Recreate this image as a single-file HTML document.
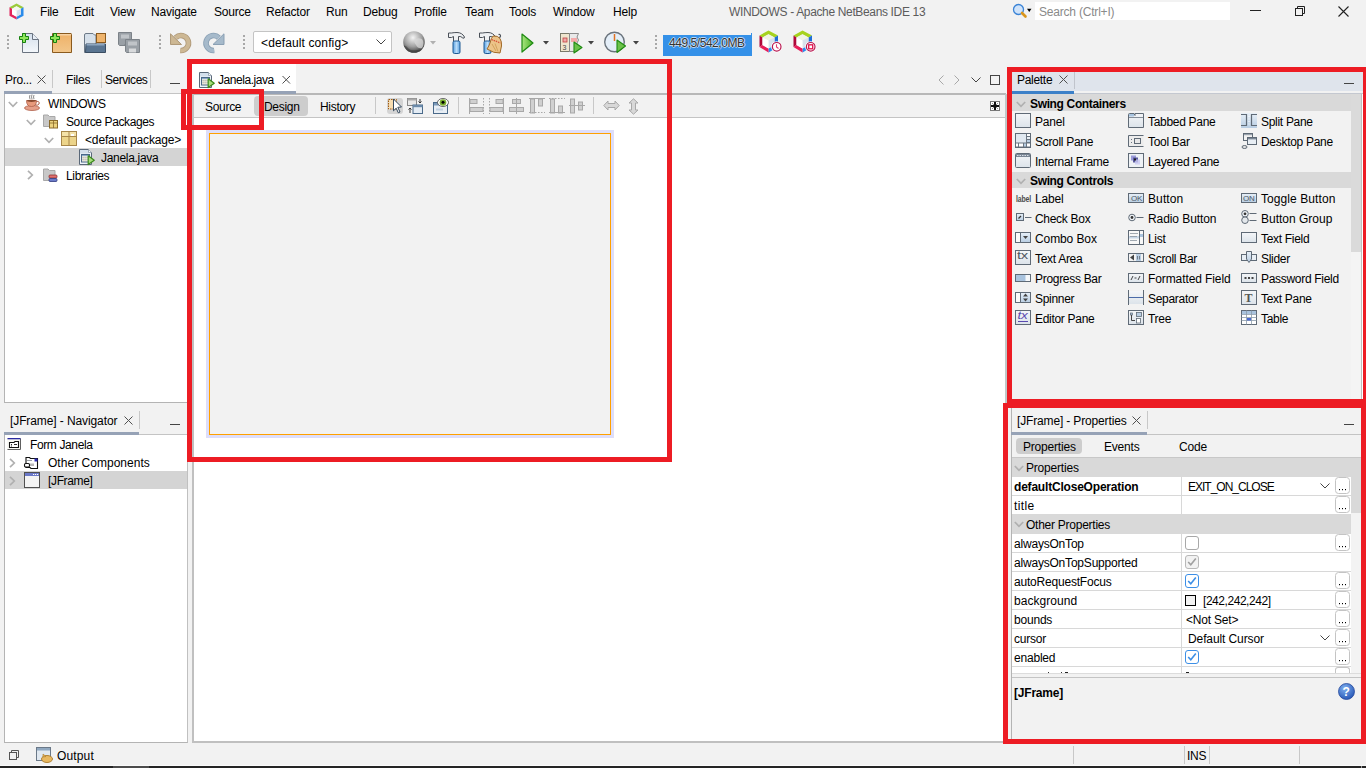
<!DOCTYPE html>
<html><head><meta charset="utf-8">
<style>
*{box-sizing:border-box}
html,body{margin:0;padding:0}
body{width:1366px;height:768px;overflow:hidden;position:relative;background:#f2f2f2;font-family:"Liberation Sans",sans-serif;font-size:12px;color:#000;letter-spacing:-0.2px}
.a{position:absolute}
.t{position:absolute;white-space:nowrap;line-height:14px;font-size:12px}
.b{font-weight:bold}
svg{position:absolute;overflow:visible}
.red{position:absolute;border:5px solid #ed1c24}
.vs{position:absolute;width:1px;background:#c8c8c8}
.hl{position:absolute;height:1px;background:#c4c4c4}
</style></head><body>

<!-- ===== TITLE / MENU BAR ===== -->
<svg style="left:9px;top:3px" width="15" height="17" viewBox="0 0 15 17">
 <polygon points="7.5,0.5 14.5,4.3 14.5,12.7 7.5,16.5 0.5,12.7 0.5,4.3" fill="#e8eef5"/>
 <polygon points="7.5,0.5 14.5,4.3 12,5.7 7.5,3.3 3,5.7 0.5,4.3" fill="#9ccb3b"/>
 <polygon points="14.5,4.3 14.5,12.7 7.5,16.5 7.5,13.7 12,11.3 12,5.7" fill="#2a8bea"/>
 <polygon points="0.5,4.3 3,5.7 3,11.3 7.5,13.7 7.5,16.5 0.5,12.7" fill="#e3245a"/>
 <polygon points="3,5.7 7.5,3.3 12,5.7 7.5,8" fill="#f4f8ee"/>
 <polygon points="7.5,8 12,5.7 12,11.3 7.5,13.7" fill="#d5dfea"/>
 <polygon points="3,5.7 7.5,8 7.5,13.7 3,11.3" fill="#ffffff"/>
</svg>
<div class="t" style="left:40px;top:5px">File</div>
<div class="t" style="left:74px;top:5px">Edit</div>
<div class="t" style="left:110px;top:5px">View</div>
<div class="t" style="left:151px;top:5px">Navigate</div>
<div class="t" style="left:214px;top:5px">Source</div>
<div class="t" style="left:266px;top:5px">Refactor</div>
<div class="t" style="left:326px;top:5px">Run</div>
<div class="t" style="left:363px;top:5px">Debug</div>
<div class="t" style="left:414px;top:5px">Profile</div>
<div class="t" style="left:465px;top:5px">Team</div>
<div class="t" style="left:509px;top:5px">Tools</div>
<div class="t" style="left:553px;top:5px">Window</div>
<div class="t" style="left:613px;top:5px">Help</div>
<div class="t" style="left:729px;top:5px;color:#5c5c5c;letter-spacing:-0.35px">WINDOWS - Apache NetBeans IDE 13</div>

<!-- search -->
<svg style="left:1012px;top:3px" width="20" height="16" viewBox="0 0 20 16">
 <circle cx="6.5" cy="6.5" r="5" fill="#cfe3fa" stroke="#3c84d6" stroke-width="1.3"/>
 <line x1="10" y1="10" x2="13.5" y2="13.5" stroke="#d9951c" stroke-width="2.6" stroke-linecap="round"/>
 <polygon points="15,5.8 19.5,5.8 17.25,9" fill="#000"/>
</svg>
<div class="a" style="left:1035px;top:2px;width:195px;height:18px;background:#fff"></div>
<div class="t" style="left:1039px;top:5px;color:#8a8a8a">Search (Ctrl+I)</div>
<!-- window controls -->
<div class="a" style="left:1250px;top:10px;width:11px;height:1px;background:#222"></div>
<svg style="left:1294px;top:5px" width="12" height="12" viewBox="0 0 12 12">
 <rect x="1.5" y="3.5" width="7" height="7" fill="none" stroke="#222"/>
 <polyline points="3.5,3.5 3.5,1.5 10.5,1.5 10.5,8.5 8.5,8.5" fill="none" stroke="#222"/>
</svg>
<svg style="left:1338px;top:6px" width="11" height="11" viewBox="0 0 11 11">
 <path d="M0.5,0.5 L10.5,10.5 M10.5,0.5 L0.5,10.5" stroke="#222" stroke-width="1.1"/>
</svg>

<!-- ===== TOOLBAR ===== -->
<!-- grips -->
<svg style="left:7px;top:35px" width="3" height="14" viewBox="0 0 3 14"><g fill="#a8a8a8"><rect x="0" y="0" width="2" height="2"/><rect x="0" y="4" width="2" height="2"/><rect x="0" y="8" width="2" height="2"/><rect x="0" y="12" width="2" height="2"/></g></svg>
<svg style="left:159px;top:35px" width="3" height="14" viewBox="0 0 3 14"><g fill="#a8a8a8"><rect x="0" y="0" width="2" height="2"/><rect x="0" y="4" width="2" height="2"/><rect x="0" y="8" width="2" height="2"/><rect x="0" y="12" width="2" height="2"/></g></svg>
<svg style="left:243px;top:35px" width="3" height="14" viewBox="0 0 3 14"><g fill="#a8a8a8"><rect x="0" y="0" width="2" height="2"/><rect x="0" y="4" width="2" height="2"/><rect x="0" y="8" width="2" height="2"/><rect x="0" y="12" width="2" height="2"/></g></svg>
<svg style="left:655px;top:35px" width="3" height="14" viewBox="0 0 3 14"><g fill="#a8a8a8"><rect x="0" y="0" width="2" height="2"/><rect x="0" y="4" width="2" height="2"/><rect x="0" y="8" width="2" height="2"/><rect x="0" y="12" width="2" height="2"/></g></svg>
<!-- new file -->
<svg style="left:19px;top:33px" width="21" height="21" viewBox="0 0 21 21">
 <defs><linearGradient id="gdoc" x1="0" y1="0" x2="0" y2="1"><stop offset="0" stop-color="#d4dfec"/><stop offset="1" stop-color="#f4f7fb"/></linearGradient></defs>
 <path d="M3.5,0.5 H13.5 L19.5,6.5 V19.5 H3.5 Z" fill="url(#gdoc)" stroke="#6a7380"/>
 <path d="M13.5,0.5 V6.5 H19.5" fill="#e8eef6" stroke="#6a7380"/>
 <path d="M3,0 H6 V3 H9 V6 H6 V9 H3 V6 H0 V3 H3 Z" fill="#8ee55a" stroke="#15800f" transform="translate(0.5,0.5)"/>
</svg>
<!-- new project -->
<svg style="left:50px;top:33px" width="23" height="21" viewBox="0 0 23 21">
 <defs><linearGradient id="gorg" x1="0" y1="0" x2="0" y2="1"><stop offset="0" stop-color="#fbe3c2"/><stop offset="0.15" stop-color="#efb46c"/><stop offset="1" stop-color="#f2c68a"/></linearGradient></defs>
 <path d="M2.5,0.5 H21 Q21.5,0.5 21.5,1.5 V19.5 H2.5 Z" fill="url(#gorg)" stroke="#8a5a1e"/>
 <path d="M3,0 H6 V3 H9 V6 H6 V9 H3 V6 H0 V3 H3 Z" fill="#8ee55a" stroke="#15800f" transform="translate(0.5,0.5)"/>
</svg>
<!-- open project -->
<svg style="left:84px;top:32px" width="23" height="22" viewBox="0 0 23 22">
 <path d="M0.5,3 Q0.5,1.5 2,1.5 H9 L10.5,3 H12 V20.5 H0.5 Z" fill="#d6e0ea" stroke="#6d7a88"/>
 <rect x="12.5" y="1.5" width="9" height="9" fill="#efb46c" stroke="#8a5a1e"/>
 <path d="M2,12 H21.5 V20.5 H1.5 Z" fill="#5a7591" stroke="#3a4d62"/>
 <rect x="2.5" y="12" width="18" height="1.5" fill="#8da6bf"/>
</svg>
<!-- save all -->
<svg style="left:118px;top:32px" width="23" height="22" viewBox="0 0 23 22">
 <path d="M0.5,0.5 H13.5 V12 H7 V13.5 H1.5 L0.5,12.5 Z" fill="#9aa0a6" stroke="#7c8288"/>
 <rect x="3" y="2.5" width="8" height="4" fill="#c0c4c8"/>
 <path d="M7.5,7.5 H21.5 V20.5 H8.5 L7.5,19.5 Z" fill="#9aa0a6" stroke="#7c8288"/>
 <rect x="10" y="9.5" width="9" height="4" fill="#c0c4c8"/>
 <rect x="11" y="16.5" width="7" height="4" fill="#d8dadc"/>
</svg>
<!-- undo -->
<svg style="left:170px;top:33px" width="22" height="21" viewBox="0 0 22 21">
 <path d="M5.7,4.7 A7.5,7.5 0 1 1 10.3,17.5" fill="none" stroke="#b09a7a" stroke-width="5.6"/>
 <polygon points="0.5,0.8 0.5,11.5 11.5,11.5" fill="#c9b490" stroke="#b09a7a" stroke-width="1" stroke-linejoin="round"/>
 <path d="M5.7,4.7 A7.5,7.5 0 1 1 10.3,17.5" fill="none" stroke="#cdb894" stroke-width="3.8"/>
 <polygon points="1.5,3 1.5,10.5 9,10.5" fill="#cdb894"/>
</svg>
<!-- redo -->
<svg style="left:203px;top:33px" width="22" height="21" viewBox="0 0 22 21">
 <g transform="translate(21.5,0) scale(-1,1)">
 <path d="M5.7,4.7 A7.5,7.5 0 1 1 10.3,17.5" fill="none" stroke="#8aa0b4" stroke-width="5.6"/>
 <polygon points="0.5,0.8 0.5,11.5 11.5,11.5" fill="#a4b8c8" stroke="#8aa0b4" stroke-width="1" stroke-linejoin="round"/>
 <path d="M5.7,4.7 A7.5,7.5 0 1 1 10.3,17.5" fill="none" stroke="#a6bacb" stroke-width="3.8"/>
 <polygon points="1.5,3 1.5,10.5 9,10.5" fill="#a6bacb"/>
 </g>
</svg>
<!-- config combo -->
<div class="a" style="left:253px;top:31px;width:139px;height:22px;background:#fff;border:1px solid #c4c4c4;border-radius:2px"></div>
<div class="t" style="left:261px;top:36px;letter-spacing:0.12px">&lt;default config&gt;</div>
<svg style="left:376px;top:39px" width="10" height="6" viewBox="0 0 10 6"><polyline points="0.5,0.5 5,5 9.5,0.5" fill="none" stroke="#444" stroke-width="1"/></svg>
<!-- globe -->
<svg style="left:403px;top:31px" width="23" height="23" viewBox="0 0 23 23">
 <defs><radialGradient id="gglb" cx="0.45" cy="0.3" r="0.75"><stop offset="0" stop-color="#f4f4f4"/><stop offset="0.55" stop-color="#a0a0a0"/><stop offset="1" stop-color="#303030"/></radialGradient>
 <clipPath id="cglb"><circle cx="11" cy="11" r="10.8"/></clipPath></defs>
 <circle cx="11" cy="11" r="10.8" fill="url(#gglb)"/>
 <g clip-path="url(#cglb)">
  <path d="M11,9 Q14,6 19,8 Q22,12 19,17 Q15,18 13,14 Q11,12 11,9 Z" fill="#d8d8d8" opacity="0.75"/>
  <path d="M0,14 Q4,15 6,18 Q8,20 14,19 Q18,19 22,17 V23 H0 Z" fill="#3a3a3a" opacity="0.55"/>
 </g>
</svg>
<svg style="left:430px;top:41px" width="6" height="4" viewBox="0 0 6 4"><polygon points="0,0 6,0 3,3.5" fill="#b0b0b0"/></svg>
<!-- build hammer -->
<svg style="left:448px;top:32px" width="19" height="22" viewBox="0 0 19 22">
 <defs><linearGradient id="ghnd" x1="0" y1="0" x2="1" y2="0"><stop offset="0" stop-color="#5aa0e0"/><stop offset="0.5" stop-color="#b8dcfa"/><stop offset="1" stop-color="#5aa0e0"/></linearGradient></defs>
 <path d="M0.5,1 H3.5 Q6,0.5 9,0.5 Q14,0.5 16.5,5 Q16.5,6.8 14.8,6 Q13,4 10.5,4.5 V9.5 H5.5 V4.5 L3.5,5.5 H0.5 Z" fill="#eef0f2" stroke="#4a5058" stroke-width="1"/>
 <rect x="5" y="9" width="7" height="12.5" rx="1.5" fill="url(#ghnd)" stroke="#1e5a94"/>
</svg>
<!-- clean build -->
<svg style="left:479px;top:32px" width="24" height="22" viewBox="0 0 24 22">
 <path d="M0.5,1 H3.5 Q6,0.5 9,0.5 Q14,0.5 16.5,5 Q16.5,6.8 14.8,6 Q13,4 10.5,4.5 V9.5 H5.5 V4.5 L3.5,5.5 H0.5 Z" fill="#eef0f2" stroke="#4a5058" stroke-width="1"/>
 <rect x="5" y="9" width="7" height="12.5" rx="1.5" fill="url(#ghnd)" stroke="#1e5a94"/>
 <path d="M19.5,2.5 Q21.5,2 21.5,4 L20.5,6" fill="none" stroke="#4a5058" stroke-width="1.2"/>
 <path d="M14,4 Q19,3.5 21,6.5 Q23,10 22.5,14 L21,21 Q15,21.5 8,17 Q10,14 11,11 Q12,6 14,4 Z" fill="#ecc489" stroke="#a06a28" stroke-width="1"/>
 <path d="M12.5,7.5 L21.5,11" stroke="#d8503a" stroke-width="1.3" stroke-dasharray="1.5,0.8"/>
 <path d="M13,12 L17,19 M16,11.5 L19,19.5" stroke="#c8944a" stroke-width="0.7"/>
</svg>
<!-- run -->
<svg style="left:521px;top:33px" width="13" height="20" viewBox="0 0 13 20">
 <defs><linearGradient id="grun" x1="0" y1="0" x2="1" y2="0"><stop offset="0" stop-color="#a8e57f"/><stop offset="1" stop-color="#4db32a"/></linearGradient></defs>
 <polygon points="1,1 12,10 1,19" fill="url(#grun)" stroke="#1e8a12" stroke-width="1.2" stroke-linejoin="round"/>
</svg>
<svg style="left:543px;top:41px" width="6" height="4" viewBox="0 0 6 4"><polygon points="0,0 6,0 3,3.5" fill="#444"/></svg>
<!-- debug -->
<svg style="left:560px;top:32px" width="23" height="22" viewBox="0 0 23 22">
 <rect x="0.5" y="1.5" width="9" height="18" fill="#efe6cf" stroke="#7a7a6a"/>
 <path d="M9.5,1.5 H18.5 L17,5 L18.5,8 L17,11 V19.5 H9.5 Z" fill="#e9e9e9" stroke="#8a8a8a"/>
 <rect x="3" y="6" width="4" height="4" fill="#f0a8a8" stroke="#c04040" stroke-width="0.8"/>
 <rect x="11" y="6" width="6" height="4" fill="#f4aaaa"/>
 <text x="2.5" y="18" font-size="7" font-family="Liberation Sans" fill="#444">3</text>
 <polygon points="14,10 22,15.5 14,21" fill="#6cc24a" stroke="#1e8a12" stroke-width="1.1" stroke-linejoin="round"/>
</svg>
<svg style="left:588px;top:41px" width="6" height="4" viewBox="0 0 6 4"><polygon points="0,0 6,0 3,3.5" fill="#444"/></svg>
<!-- profile -->
<svg style="left:604px;top:31px" width="23" height="23" viewBox="0 0 23 23">
 <circle cx="10.5" cy="11" r="9.8" fill="#e4eef8" stroke="#6a737c" stroke-width="1.4"/>
 <line x1="10.5" y1="3" x2="10.5" y2="10" stroke="#e07020" stroke-width="1.5"/>
 <polygon points="13,9 21.5,15 13,21.5" fill="#6cc24a" stroke="#1e8a12" stroke-width="1.1" stroke-linejoin="round"/>
</svg>
<svg style="left:633px;top:41px" width="6" height="4" viewBox="0 0 6 4"><polygon points="0,0 6,0 3,3.5" fill="#444"/></svg>
<!-- memory -->
<div class="a" style="left:663px;top:35px;width:89px;height:21px;background:#3591e8"></div>
<div class="a" style="left:751px;top:33px;width:1px;height:2px;background:#3591e8"></div>
<div class="t" style="left:669px;top:36px;color:#333;letter-spacing:-0.45px;text-shadow:1px 0 0 rgba(230,236,245,.75),-1px 0 0 rgba(230,236,245,.75),0 1px 0 rgba(230,236,245,.75),0 -1px 0 rgba(230,236,245,.75)">449,5/542,0MB</div>
<!-- NB profiler icons -->
<svg style="left:759px;top:30px" width="24" height="24" viewBox="0 0 24 24">
 <polygon points="9.5,0.5 19,5.5 19,17 9.5,22.5 0.5,17 0.5,5.5" fill="#e8eef4"/>
 <polygon points="9.5,0.5 19,5.5 15.5,7.5 9.5,4.3 3.5,7.5 0.5,5.5" fill="#a6d21e"/>
 <polygon points="19,5.5 19,17 15.5,15 15.5,7.5" fill="#1f6fd8"/>
 <polygon points="9.5,22.5 19,17 15.5,15 9.5,18.5" fill="#2a8cf0"/>
 <polygon points="0.5,5.5 3.5,7.5 3.5,15 0.5,17" fill="#b0083a"/>
 <polygon points="0.5,17 3.5,15 9.5,18.5 9.5,22.5" fill="#e81e5a"/>
 <polygon points="3.5,7.5 9.5,4.3 15.5,7.5 9.5,10.5" fill="#f0f4e4"/>
 <polygon points="9.5,10.5 15.5,7.5 15.5,15 9.5,18.5" fill="#d8e2ec"/>
 <polygon points="3.5,7.5 9.5,10.5 9.5,18.5 3.5,15" fill="#fff"/>
 <circle cx="17.7" cy="16.8" r="5.6" fill="#fff"/>
 <circle cx="17.7" cy="16.8" r="4.3" fill="#fff" stroke="#b81850" stroke-width="1.2"/>
 <path d="M17.5,14.3 V17 L19.5,18.5" fill="none" stroke="#e04070" stroke-width="1.1"/>
</svg>
<svg style="left:793px;top:30px" width="24" height="24" viewBox="0 0 24 24">
 <polygon points="9.5,0.5 19,5.5 19,17 9.5,22.5 0.5,17 0.5,5.5" fill="#e8eef4"/>
 <polygon points="9.5,0.5 19,5.5 15.5,7.5 9.5,4.3 3.5,7.5 0.5,5.5" fill="#a6d21e"/>
 <polygon points="19,5.5 19,17 15.5,15 15.5,7.5" fill="#1f6fd8"/>
 <polygon points="9.5,22.5 19,17 15.5,15 9.5,18.5" fill="#2a8cf0"/>
 <polygon points="0.5,5.5 3.5,7.5 3.5,15 0.5,17" fill="#b0083a"/>
 <polygon points="0.5,17 3.5,15 9.5,18.5 9.5,22.5" fill="#e81e5a"/>
 <polygon points="3.5,7.5 9.5,4.3 15.5,7.5 9.5,10.5" fill="#f0f4e4"/>
 <polygon points="9.5,10.5 15.5,7.5 15.5,15 9.5,18.5" fill="#d8e2ec"/>
 <polygon points="3.5,7.5 9.5,10.5 9.5,18.5 3.5,15" fill="#fff"/>
 <circle cx="17.7" cy="16.8" r="5.6" fill="#fff"/>
 <circle cx="17.7" cy="16.8" r="4.3" fill="#fff" stroke="#b81850" stroke-width="1.2"/>
 <rect x="15.7" y="14.8" width="4" height="4" fill="#fff" stroke="#e0104a" stroke-width="1.3"/>
</svg>

<!-- ===== LEFT PANELS ===== -->
<!-- Projects tabs -->
<div class="t" style="left:5px;top:73px;letter-spacing:-0.3px">Pro...</div>
<svg style="left:37px;top:75px" width="9" height="9" viewBox="0 0 9 9"><path d="M0.5,0.5 L8.5,8.5 M8.5,0.5 L0.5,8.5" stroke="#505050" stroke-width="1"/></svg>
<div class="vs" style="left:52px;top:70px;height:18px"></div>
<div class="t" style="left:66px;top:73px">Files</div>
<div class="vs" style="left:101px;top:70px;height:18px"></div>
<div class="t" style="left:105px;top:73px;letter-spacing:-0.45px">Services</div>
<div class="vs" style="left:150px;top:70px;height:18px"></div>
<div class="a" style="left:170px;top:83px;width:10px;height:1px;background:#444"></div>
<div class="a" style="left:4px;top:91px;width:48px;height:3px;background:#96a2b6"></div>
<div class="a" style="left:52px;top:93px;width:135px;height:1px;background:#c4c4c4"></div>
<!-- project tree -->
<div class="a" style="left:4px;top:94px;width:184px;height:309px;background:#fff;border-left:1px solid #b4b4b4;border-bottom:1px solid #b4b4b4;border-right:1px solid #c0c0c0"></div>
<div class="a" style="left:5px;top:148px;width:182px;height:18px;background:#d4d4d4"></div>
<!-- chevrons -->
<svg style="left:8px;top:101px" width="10" height="7" viewBox="0 0 10 7"><polyline points="0.8,1 5,5.3 9.2,1" fill="none" stroke="#b0b0b0" stroke-width="1.7"/></svg>
<svg style="left:26px;top:119px" width="10" height="7" viewBox="0 0 10 7"><polyline points="0.8,1 5,5.3 9.2,1" fill="none" stroke="#b0b0b0" stroke-width="1.7"/></svg>
<svg style="left:44px;top:137px" width="10" height="7" viewBox="0 0 10 7"><polyline points="0.8,1 5,5.3 9.2,1" fill="none" stroke="#b0b0b0" stroke-width="1.7"/></svg>
<svg style="left:27px;top:170px" width="7" height="10" viewBox="0 0 7 10"><polyline points="1,0.8 5.3,5 1,9.2" fill="none" stroke="#b0b0b0" stroke-width="1.7"/></svg>
<!-- coffee -->
<svg style="left:24px;top:94px" width="17" height="17" viewBox="0 0 17 17">
 <path d="M6,1 Q5,3 6,5 M8,0.5 Q7,3 8,5 M10,1 Q9,3 10,5" stroke="#808080" stroke-width="0.9" fill="none"/>
 <ellipse cx="8" cy="14" rx="7.5" ry="2.5" fill="#e6a08a" stroke="#b0604a" stroke-width="0.8"/>
 <path d="M2.5,6.5 H12.5 Q12.5,12.5 7.5,12.5 Q2.5,12.5 2.5,6.5 Z" fill="#e89a7c" stroke="#b0604a" stroke-width="0.8"/>
 <path d="M12.3,7.5 Q16,7 15,10 Q14,11.5 11.5,11" fill="none" stroke="#b0604a" stroke-width="1"/>
 <ellipse cx="7.5" cy="6.8" rx="4.5" ry="1.1" fill="#8a4a30"/>
</svg>
<div class="t" style="left:48px;top:97px;letter-spacing:-0.45px">WINDOWS</div>
<!-- source packages -->
<svg style="left:43px;top:114px" width="16" height="15" viewBox="0 0 16 15">
 <path d="M0.5,1 H5 L6.5,2.5 H12 V12.5 H0.5 Z" fill="#c8c8c8" stroke="#a8a8a8"/>
 <rect x="6.5" y="6.5" width="8" height="7.5" fill="#ecd27e" stroke="#8a6a2a"/>
 <line x1="10.5" y1="6.5" x2="10.5" y2="14" stroke="#8a6a2a" stroke-width="0.8"/>
 <line x1="6.5" y1="9" x2="14.5" y2="9" stroke="#8a6a2a" stroke-width="0.8"/>
</svg>
<div class="t" style="left:66px;top:115px;letter-spacing:-0.4px">Source Packages</div>
<!-- default package -->
<svg style="left:61px;top:131px" width="16" height="15" viewBox="0 0 16 15">
 <rect x="0.5" y="0.5" width="15" height="14" fill="#ecd48a" stroke="#a8874a"/>
 <rect x="1" y="1" width="14" height="4" fill="#f4e2a8"/>
 <line x1="8" y1="0.5" x2="8" y2="14.5" stroke="#a8874a"/>
 <line x1="0.5" y1="5.5" x2="15.5" y2="5.5" stroke="#a8874a"/>
 <rect x="10" y="3" width="3" height="2" fill="#fff"/>
</svg>
<div class="t" style="left:85px;top:133px;letter-spacing:-0.15px">&lt;default package&gt;</div>
<!-- java file -->
<svg style="left:79px;top:149px" width="16" height="16" viewBox="0 0 16 16">
 <path d="M0.5,0.5 H9.5 L12.5,3.5 V15.5 H0.5 Z" fill="#eef3f8" stroke="#5a6878"/>
 <rect x="1" y="1" width="8.5" height="3.5" fill="#d3dfeb"/>
 <path d="M9.5,0.5 V3.5 H12.5" fill="#fafcff" stroke="#8a98a8" stroke-width="0.8"/>
 <rect x="2.5" y="5.5" width="8" height="7.5" fill="#f7f2e2" stroke="#4a6888"/>
 <rect x="3" y="6" width="7" height="1.2" fill="#8aa8c8"/>
 <path d="M3.5,8.8 H9.5 M3.5,10.8 H9.5" stroke="#808890" stroke-width="0.9" stroke-dasharray="1.2,0.8"/>
 <polygon points="9.2,6.8 15.3,11.2 9.2,15.6" fill="#a6dc7c" stroke="#3c8a1c" stroke-width="1.2" stroke-linejoin="round"/>
</svg>
<div class="t" style="left:101px;top:151px;letter-spacing:-0.3px">Janela.java</div>
<!-- libraries -->
<svg style="left:43px;top:168px" width="16" height="15" viewBox="0 0 16 15">
 <path d="M0.5,1 H5 L6.5,2.5 H12 V12.5 H0.5 Z" fill="#c8c8c8" stroke="#a8a8a8"/>
 <rect x="6" y="7" width="8" height="3" rx="1" fill="#e07070" stroke="#903030" stroke-width="0.8"/>
 <rect x="6" y="10.5" width="8" height="3" rx="1" fill="#6a7ac8" stroke="#303a80" stroke-width="0.8"/>
</svg>
<div class="t" style="left:66px;top:169px;letter-spacing:-0.3px">Libraries</div>

<!-- Navigator -->
<div class="t" style="left:10px;top:414px;letter-spacing:-0.1px">[JFrame] - Navigator</div>
<svg style="left:124px;top:416px" width="9" height="9" viewBox="0 0 9 9"><path d="M0.5,0.5 L8.5,8.5 M8.5,0.5 L0.5,8.5" stroke="#505050" stroke-width="1"/></svg>
<div class="vs" style="left:139px;top:411px;height:18px"></div>
<div class="a" style="left:170px;top:424px;width:10px;height:1px;background:#444"></div>
<div class="a" style="left:4px;top:432px;width:135px;height:3px;background:#96a2b6"></div>
<div class="a" style="left:139px;top:434px;width:48px;height:1px;background:#c4c4c4"></div>
<div class="a" style="left:4px;top:435px;width:184px;height:308px;background:#fff;border-left:1px solid #b4b4b4;border-bottom:1px solid #b4b4b4;border-right:1px solid #c0c0c0"></div>
<div class="a" style="left:5px;top:471px;width:182px;height:18px;background:#d4d4d4"></div>
<svg style="left:7px;top:438px" width="14" height="12" viewBox="0 0 14 12">
 <rect x="0" y="0" width="14" height="12" fill="#f8f8f4"/>
 <path d="M0.5,11.5 H13.5 V0.5" fill="none" stroke="#606060"/>
 <rect x="0.5" y="0" width="13" height="1.3" fill="#2a2aa0"/>
 <path d="M2.5,4.5 H7 L8,3.5 H11.5 V9.5 H2.5 Z" fill="#fff" stroke="#101010" stroke-width="1.1"/>
 <path d="M4,6.5 H5 M4,8 H5 M7,6.5 H10" stroke="#101010" stroke-width="0.9"/>
</svg>
<div class="t" style="left:30px;top:438px;letter-spacing:-0.38px">Form Janela</div>
<svg style="left:9px;top:458px" width="7" height="10" viewBox="0 0 7 10"><polyline points="1,0.8 5.3,5 1,9.2" fill="none" stroke="#b0b0b0" stroke-width="1.7"/></svg>
<svg style="left:24px;top:456px" width="15" height="14" viewBox="0 0 15 14">
 <path d="M2,1.5 H5.5 L6.5,2.5 H13.5 V12.5 H7 L6,11.5 H2 Z" fill="#fff" stroke="#101010" stroke-width="1.1"/>
 <path d="M3,4.5 H8" stroke="#9aa0a8" stroke-width="1"/>
 <rect x="10.5" y="2.5" width="3" height="3" fill="#2a2ab0"/>
 <rect x="0.5" y="7.5" width="5" height="3.5" rx="1.2" fill="#fff" stroke="#101010" stroke-width="1.1"/>
 <rect x="6" y="7.5" width="4" height="2.5" fill="#b8b8b8"/>
</svg>
<div class="t" style="left:48px;top:456px;letter-spacing:0.03px">Other Components</div>
<svg style="left:9px;top:476px" width="7" height="10" viewBox="0 0 7 10"><polyline points="1,0.8 5.3,5 1,9.2" fill="none" stroke="#b0b0b0" stroke-width="1.7"/></svg>
<svg style="left:24px;top:472px" width="16" height="16" viewBox="0 0 16 16">
 <rect x="0.5" y="0.5" width="15" height="15" fill="#f4f4f4" stroke="#505050"/>
 <rect x="1" y="1" width="14" height="3" fill="#6a78c8"/>
 <rect x="9" y="2" width="1.2" height="1" fill="#fff"/><rect x="11" y="2" width="1.2" height="1" fill="#fff"/><rect x="13" y="2" width="1.2" height="1" fill="#fff"/>
</svg>
<div class="t" style="left:48px;top:474px;letter-spacing:-0.35px">[JFrame]</div>

<!-- Output status -->
<svg style="left:9px;top:750px" width="11" height="11" viewBox="0 0 11 11">
 <rect x="0.5" y="2.5" width="7" height="7" fill="#f2f2f2" stroke="#555"/>
 <polyline points="2.5,2.5 2.5,0.5 9.5,0.5 9.5,7.5 7.5,7.5" fill="none" stroke="#555"/>
</svg>
<svg style="left:36px;top:747px" width="17" height="16" viewBox="0 0 17 16">
 <rect x="0.5" y="0.5" width="14" height="13" fill="#e0e8f0" stroke="#6a7888"/>
 <rect x="1" y="1" width="13" height="2.5" fill="#90a8c0"/>
 <ellipse cx="11" cy="12" rx="5.5" ry="3.5" fill="#e8b860" stroke="#a87828" stroke-width="0.9"/>
 <polygon points="7,7 10,9.5 7,10" fill="#e8b860" stroke="#a87828" stroke-width="0.6"/>
</svg>
<div class="t" style="left:57px;top:749px;letter-spacing:0.15px">Output</div>


<!-- ===== EDITOR ===== -->
<!-- editor tab row -->
<div class="a" style="left:192px;top:64px;width:104px;height:27px;background:#fff"></div>
<div class="a" style="left:192px;top:91px;width:104px;height:3px;background:#96a2b6"></div>
<div class="a" style="left:296px;top:93px;width:710px;height:1px;background:#b8b8b8"></div>
<svg style="left:199px;top:72px" width="16" height="16" viewBox="0 0 16 16">
 <path d="M0.5,0.5 H9.5 L12.5,3.5 V15.5 H0.5 Z" fill="#eef3f8" stroke="#5a6878"/>
 <rect x="1" y="1" width="8.5" height="3.5" fill="#d3dfeb"/>
 <path d="M9.5,0.5 V3.5 H12.5" fill="#fafcff" stroke="#8a98a8" stroke-width="0.8"/>
 <rect x="2.5" y="5.5" width="8" height="7.5" fill="#f7f2e2" stroke="#4a6888"/>
 <rect x="3" y="6" width="7" height="1.2" fill="#8aa8c8"/>
 <path d="M3.5,8.8 H9.5 M3.5,10.8 H9.5" stroke="#808890" stroke-width="0.9" stroke-dasharray="1.2,0.8"/>
 <polygon points="9.2,6.8 15.3,11.2 9.2,15.6" fill="#a6dc7c" stroke="#3c8a1c" stroke-width="1.2" stroke-linejoin="round"/>
</svg>
<div class="t" style="left:218px;top:73px;letter-spacing:-0.45px">Janela.java</div>
<svg style="left:282px;top:76px" width="9" height="8" viewBox="0 0 9 8"><path d="M0.5,0 L8,7.5 M8,0 L0.5,7.5" stroke="#505050" stroke-width="1"/></svg>
<!-- tab controls -->
<svg style="left:938px;top:75px" width="6" height="10" viewBox="0 0 6 10"><polyline points="5.5,0.5 1,5 5.5,9.5" fill="none" stroke="#a8a8a8" stroke-width="1"/></svg>
<svg style="left:954px;top:75px" width="6" height="10" viewBox="0 0 6 10"><polyline points="0.5,0.5 5,5 0.5,9.5" fill="none" stroke="#a8a8a8" stroke-width="1"/></svg>
<svg style="left:971px;top:77px" width="10" height="6" viewBox="0 0 10 6"><polyline points="0.5,0.5 5,5 9.5,0.5" fill="none" stroke="#444" stroke-width="1"/></svg>
<div class="a" style="left:990px;top:75px;width:10px;height:10px;border:1px solid #444"></div>
<!-- editor body -->
<div class="a" style="left:192px;top:94px;width:815px;height:649px;border-left:2px solid #c0c0c0;border-right:2px solid #c0c8c8;border-bottom:2px solid #c0c0c0;background:#fff"></div>
<div class="a" style="left:194px;top:94px;width:811px;height:24px;background:#f2f2f2;border-bottom:1px solid #c4c4c4"></div>
<div class="a" style="left:194px;top:94px;width:811px;height:1px;background:#b8b8b8"></div>
<div class="a" style="left:254px;top:96px;width:54px;height:20px;background:#cdcdcd;border-radius:4px"></div>
<div class="t" style="left:205px;top:100px;letter-spacing:-0.3px">Source</div>
<div class="t" style="left:264px;top:100px;letter-spacing:-0.3px">Design</div>
<div class="t" style="left:320px;top:100px;letter-spacing:-0.3px">History</div>
<div class="vs" style="left:375px;top:97px;height:17px"></div>
<!-- selection tool -->
<div class="a" style="left:387px;top:98px;width:16px;height:16px;background:#d4d4d4;border-radius:3px"></div>
<svg style="left:387px;top:98px" width="16" height="16" viewBox="0 0 16 16">
 <rect x="1.5" y="1.5" width="8" height="9.5" fill="#f6dcb0" stroke="#a05a10" stroke-dasharray="1.5,1"/>
 <path d="M6.5,1 L14.5,9 L10.8,9.3 L13,14 L11.3,14.8 L9.2,10.2 L6.5,12.8 Z" fill="#fff" stroke="#34495e" stroke-width="1"/>
</svg>
<!-- connection -->
<svg style="left:407px;top:98px" width="16" height="16" viewBox="0 0 16 16">
 <rect x="0.5" y="0.5" width="9" height="7" fill="#e8e8e8" stroke="#888"/>
 <rect x="0.5" y="0.5" width="9" height="2" fill="#aaa"/>
 <rect x="6" y="7" width="9.5" height="8.5" fill="#e4ecf4" stroke="#4a6a8a"/>
 <rect x="6" y="7" width="9.5" height="2.2" fill="#6a8aaa"/>
 <path d="M13,1 V5 M11.5,3.5 L13,5 L14.5,3.5" stroke="#333" fill="none" stroke-width="1"/>
 <path d="M3,15 V10 M1.5,11.5 L3,10 L4.5,11.5" stroke="#333" fill="none" stroke-width="1"/>
</svg>
<!-- preview -->
<svg style="left:433px;top:98px" width="16" height="16" viewBox="0 0 16 16">
 <rect x="0.5" y="4.5" width="14" height="11" fill="#e8eef4" stroke="#4a6a8a"/>
 <rect x="1" y="5" width="13" height="2.5" fill="#7a9aba"/>
 <rect x="3" y="10.5" width="7" height="2" fill="#c0d0e0"/>
 <ellipse cx="10" cy="4.5" rx="5.5" ry="4" fill="#fff" stroke="#444" stroke-width="0.8"/>
 <circle cx="10" cy="4.5" r="3.3" fill="#7ab030"/>
 <circle cx="10" cy="4.2" r="1.5" fill="#000"/>
</svg>
<div class="vs" style="left:458px;top:97px;height:17px"></div>
<!-- align icons (gray) -->
<svg style="left:469px;top:98px" width="16" height="16" viewBox="0 0 16 16" fill="#d0d0d0" stroke="#a8a8a8" stroke-width="1">
 <path d="M0.5,0 V16"/><rect x="1" y="1.5" width="7" height="4"/><rect x="1" y="9.5" width="13" height="4"/><path d="M14.5,0 V16" stroke-dasharray="1.5,1.5"/>
</svg>
<svg style="left:489px;top:98px" width="16" height="16" viewBox="0 0 16 16" fill="#d0d0d0" stroke="#a8a8a8" stroke-width="1">
 <path d="M0.5,0 V16" stroke-dasharray="1.5,1.5"/><rect x="7" y="1.5" width="7" height="4"/><rect x="1" y="9.5" width="13" height="4"/><path d="M14.5,0 V16"/>
</svg>
<svg style="left:509px;top:98px" width="16" height="16" viewBox="0 0 16 16" fill="#d0d0d0" stroke="#a8a8a8" stroke-width="1">
 <rect x="3.5" y="1.5" width="8" height="4"/><rect x="0.5" y="9.5" width="14" height="4"/><path d="M7.5,0 V16"/>
</svg>
<svg style="left:529px;top:98px" width="16" height="16" viewBox="0 0 16 16" fill="#d0d0d0" stroke="#a8a8a8" stroke-width="1">
 <path d="M0,0.5 H16"/><rect x="1.5" y="1" width="4" height="14"/><rect x="9.5" y="1" width="4" height="7"/><path d="M0,14.5 H16" stroke-dasharray="1.5,1.5"/>
</svg>
<svg style="left:549px;top:98px" width="16" height="16" viewBox="0 0 16 16" fill="#d0d0d0" stroke="#a8a8a8" stroke-width="1">
 <path d="M0,0.5 H16" stroke-dasharray="1.5,1.5"/><rect x="1.5" y="1" width="4" height="14"/><rect x="9.5" y="8" width="4" height="7"/><path d="M0,14.5 H16"/>
</svg>
<svg style="left:569px;top:98px" width="16" height="16" viewBox="0 0 16 16" fill="#d0d0d0" stroke="#a8a8a8" stroke-width="1">
 <rect x="1.5" y="1" width="4" height="14"/><rect x="9.5" y="4" width="4" height="8"/><path d="M0,7.5 H16"/>
</svg>
<div class="vs" style="left:593px;top:97px;height:17px"></div>
<svg style="left:603px;top:99px" width="17" height="13" viewBox="0 0 17 13">
 <path d="M0.8,6.5 L5,2 V4.5 H12 V2 L16.2,6.5 L12,11 V8.5 H5 V11 Z" fill="#d8d8d8" stroke="#a8a8a8" stroke-width="1"/>
</svg>
<svg style="left:628px;top:98px" width="11" height="17" viewBox="0 0 11 17">
 <path d="M5.5,0.8 L10,5 H7.5 V12 H10 L5.5,16.2 L1,12 H3.5 V5 H1 Z" fill="#d8d8d8" stroke="#a8a8a8" stroke-width="1"/>
</svg>
<!-- grid icon -->
<svg style="left:990px;top:101px" width="10" height="10" viewBox="0 0 10 10">
 <rect x="0.5" y="0.5" width="9" height="9" fill="#fff" stroke="#777"/>
 <path d="M4,1 H6 V4 H9 V6 H6 V9 H4 V6 H1 V4 H4 Z" fill="#111"/>
 <path d="M2.5,2.5 L3.5,3.5 M7.5,2.5 L6.5,3.5 M2.5,7.5 L3.5,6.5 M7.5,7.5 L6.5,6.5" stroke="#333" stroke-width="1"/>
</svg>
<!-- form -->
<div class="a" style="left:206px;top:130px;width:408px;height:308px;background:#dedefa"></div>
<div class="a" style="left:209px;top:133px;width:402px;height:302px;background:#f2f2f2;border:1px solid #ffa000"></div>


<!-- ===== PALETTE ===== -->
<svg style="left:0;top:0" width="0" height="0"><defs>
 <linearGradient id="gp" x1="0" y1="0" x2="0" y2="1"><stop offset="0" stop-color="#f4f6f8"/><stop offset="1" stop-color="#dce3ea"/></linearGradient>
 <linearGradient id="gb" x1="0" y1="0" x2="0" y2="1"><stop offset="0" stop-color="#e8f0f8"/><stop offset="1" stop-color="#b8cde2"/></linearGradient>
</defs></svg>
<div class="a" style="left:1012px;top:67px;width:351px;height:24px;background:#dfe4ec"></div>
<div class="a" style="left:1012px;top:91px;width:62px;height:3px;background:#3c80c8"></div>
<div class="a" style="left:1074px;top:93px;width:289px;height:1px;background:#c4c8d0"></div>
<div class="t" style="left:1017px;top:73px;letter-spacing:-0.3px">Palette</div>
<svg style="left:1059px;top:75px" width="9" height="9" viewBox="0 0 9 9"><path d="M0.5,0.5 L8.5,8.5 M8.5,0.5 L0.5,8.5" stroke="#505050" stroke-width="1"/></svg>
<div class="vs" style="left:1074px;top:72px;height:17px;background:#c0c4cc"></div>
<div class="a" style="left:1344px;top:83px;width:10px;height:1px;background:#444"></div>
<div class="a" style="left:1012px;top:94px;width:351px;height:306px;background:#f2f2f2"></div>
<div class="a" style="left:1351px;top:94px;width:10px;height:158px;background:#dadada"></div>
<div class="a" style="left:1351px;top:252px;width:10px;height:148px;background:#f4f4f4"></div>
<div class="a" style="left:1361px;top:94px;width:1px;height:306px;background:#c0c0c0"></div>
<div class="a" style="left:1362px;top:94px;width:1px;height:306px;background:#fff"></div>
<!-- categories -->
<div class="a" style="left:1012px;top:94px;width:339px;height:17px;background:#d9d9d9"></div>
<svg style="left:1016px;top:101px" width="10" height="7" viewBox="0 0 10 7"><polyline points="0.8,1 5,5.3 9.2,1" fill="none" stroke="#b0b0b0" stroke-width="1.7"/></svg>
<div class="t b" style="left:1030px;top:97px;letter-spacing:-0.35px">Swing Containers</div>
<div class="a" style="left:1012px;top:172px;width:339px;height:16px;background:#d9d9d9"></div>
<svg style="left:1016px;top:178px" width="10" height="7" viewBox="0 0 10 7"><polyline points="0.8,1 5,5.3 9.2,1" fill="none" stroke="#b0b0b0" stroke-width="1.7"/></svg>
<div class="t b" style="left:1030px;top:174px;letter-spacing:-0.35px">Swing Controls</div>
<!-- item labels -->
<div class="t" style="left:1035px;top:115px">Panel</div>
<div class="t" style="left:1148px;top:115px;letter-spacing:-0.3px">Tabbed Pane</div>
<div class="t" style="left:1261px;top:115px;letter-spacing:-0.3px">Split Pane</div>
<div class="t" style="left:1035px;top:135px;letter-spacing:-0.3px">Scroll Pane</div>
<div class="t" style="left:1148px;top:135px;letter-spacing:-0.3px">Tool Bar</div>
<div class="t" style="left:1261px;top:135px;letter-spacing:-0.3px">Desktop Pane</div>
<div class="t" style="left:1035px;top:155px;letter-spacing:-0.3px">Internal Frame</div>
<div class="t" style="left:1148px;top:155px;letter-spacing:-0.3px">Layered Pane</div>
<div class="t" style="left:1035px;top:192px">Label</div>
<div class="t" style="left:1148px;top:192px;letter-spacing:0.12px">Button</div>
<div class="t" style="left:1261px;top:192px;letter-spacing:0.08px">Toggle Button</div>
<div class="t" style="left:1035px;top:212px;letter-spacing:-0.3px">Check Box</div>
<div class="t" style="left:1148px;top:212px;letter-spacing:-0.08px">Radio Button</div>
<div class="t" style="left:1261px;top:212px;letter-spacing:0px">Button Group</div>
<div class="t" style="left:1035px;top:232px;letter-spacing:-0.1px">Combo Box</div>
<div class="t" style="left:1148px;top:232px;letter-spacing:-0.3px">List</div>
<div class="t" style="left:1261px;top:232px;letter-spacing:-0.3px">Text Field</div>
<div class="t" style="left:1035px;top:252px;letter-spacing:-0.3px">Text Area</div>
<div class="t" style="left:1148px;top:252px;letter-spacing:-0.3px">Scroll Bar</div>
<div class="t" style="left:1261px;top:252px;letter-spacing:-0.3px">Slider</div>
<div class="t" style="left:1035px;top:272px;letter-spacing:-0.3px">Progress Bar</div>
<div class="t" style="left:1148px;top:272px;letter-spacing:-0.1px">Formatted Field</div>
<div class="t" style="left:1261px;top:272px;letter-spacing:-0.3px">Password Field</div>
<div class="t" style="left:1035px;top:292px;letter-spacing:-0.3px">Spinner</div>
<div class="t" style="left:1148px;top:292px;letter-spacing:-0.3px">Separator</div>
<div class="t" style="left:1261px;top:292px;letter-spacing:-0.3px">Text Pane</div>
<div class="t" style="left:1035px;top:312px;letter-spacing:-0.3px">Editor Pane</div>
<div class="t" style="left:1148px;top:312px;letter-spacing:-0.3px">Tree</div>
<div class="t" style="left:1261px;top:312px;letter-spacing:-0.3px">Table</div>
<!-- icons: containers -->
<svg style="left:1015px;top:113px" width="16" height="15" viewBox="0 0 16 15"><rect x="0.5" y="0.5" width="15" height="14" fill="url(#gp)" stroke="#5f6a76"/></svg>
<svg style="left:1015px;top:133px" width="16" height="15" viewBox="0 0 16 15"><rect x="0.5" y="0.5" width="15" height="14" fill="#6b7682" stroke="#5f6a76"/><rect x="1" y="1" width="10" height="8.5" fill="#e0e8f0"/><rect x="12" y="1" width="3" height="2" fill="#fff"/><rect x="12" y="4" width="3" height="2" fill="#e8eef4"/><rect x="12" y="7" width="3" height="2" fill="#b8cde2"/><rect x="1" y="10.5" width="2" height="3" fill="#fff"/><rect x="4" y="10.5" width="4" height="3" fill="#fff"/><rect x="9" y="10.5" width="2" height="3" fill="#b8cde2"/><rect x="12" y="10.5" width="3" height="3" fill="#fff"/></svg>
<svg style="left:1015px;top:153px" width="16" height="15" viewBox="0 0 16 15"><rect x="0.5" y="0.5" width="15" height="14" rx="1" fill="url(#gp)" stroke="#5f6a76"/><rect x="1" y="1" width="14" height="3" fill="#7a8694"/><path d="M2,2.5 H14" stroke="#d8dee6" stroke-dasharray="1.5,1"/></svg>
<svg style="left:1128px;top:113px" width="16" height="15" viewBox="0 0 16 15"><path d="M0.5,14.5 V1.5 Q0.5,0.5 1.5,0.5 H6 L7,2.5 V0.5 H15.5 V14.5 Z" fill="url(#gp)" stroke="#5f6a76"/><rect x="1" y="1" width="5" height="2.5" fill="#a8c4e0"/><rect x="1" y="4" width="14" height="0.8" fill="#6b7682"/></svg>
<svg style="left:1128px;top:135px" width="16" height="12" viewBox="0 0 16 12"><path d="M15.5,0.5 H0.5 V11.5 H15.5" fill="#ececec" stroke="#5f6a76"/><rect x="6.5" y="3.5" width="6" height="5" fill="#e8e8e8" stroke="#5f6a76"/><rect x="3" y="4" width="1" height="1" fill="#6b7682"/><rect x="3" y="7" width="1" height="1" fill="#6b7682"/></svg>
<svg style="left:1128px;top:153px" width="16" height="15" viewBox="0 0 16 15"><rect x="0.5" y="0.5" width="15" height="14" fill="#eef2f6" stroke="#5f6a76"/><rect x="3" y="2.5" width="5" height="5" fill="#9a9ad8"/><rect x="5" y="4.5" width="5" height="5" fill="#5a5aa0"/><rect x="7" y="6.5" width="5" height="5" fill="#c8c8f4" opacity="0.8"/><rect x="6" y="5.5" width="2" height="2" fill="#222"/></svg>
<svg style="left:1241px;top:113px" width="16" height="15" viewBox="0 0 16 15"><rect x="0" y="0" width="16" height="15" fill="url(#gb)"/><path d="M0,1.5 H5.5 V12.5 H0 M16,1.5 H10.5 V12.5 H16" fill="none" stroke="#5f6a76" stroke-width="1.2"/><g fill="#fff"><rect x="7.5" y="3" width="1" height="1"/><rect x="7.5" y="5.5" width="1" height="1"/><rect x="7.5" y="8" width="1" height="1"/><rect x="7.5" y="10.5" width="1" height="1"/></g></svg>
<svg style="left:1241px;top:133px" width="16" height="16" viewBox="0 0 16 16"><rect x="2.5" y="0.5" width="9" height="7" fill="#f2f2f2" stroke="#5f6a76"/><rect x="3" y="1" width="8" height="1.2" fill="#9aa4ae"/><rect x="6.5" y="4.5" width="9" height="7" fill="#e8eef4" stroke="#5f6a76"/><rect x="7" y="5" width="8" height="1.4" fill="#7a8694"/><ellipse cx="3.5" cy="14" rx="2.5" ry="1.5" fill="#e0e0e0" stroke="#5f6a76"/></svg>
<!-- icons: controls -->
<svg style="left:1016px;top:194px" width="16" height="9" viewBox="0 0 16 9"><text x="0" y="7.5" font-family="Liberation Sans" font-size="9.5" font-weight="bold" fill="#4a4a4a" textLength="15" lengthAdjust="spacingAndGlyphs">label</text></svg>
<svg style="left:1016px;top:213px" width="16" height="9" viewBox="0 0 16 9"><rect x="0.5" y="0.5" width="7" height="7" fill="url(#gb)" stroke="#5f6a76"/><path d="M2.5,5.5 L5,3" stroke="#333" stroke-width="1.2"/><path d="M9,4.5 H15.5" stroke="#5f6a76"/></svg>
<svg style="left:1015px;top:232px" width="16" height="11" viewBox="0 0 16 11"><rect x="0.5" y="0.5" width="15" height="10" fill="url(#gb)" stroke="#5f6a76"/><rect x="1" y="1" width="4.5" height="9" fill="#fbfbfb"/><path d="M5.5,0.5 V10.5" stroke="#5f6a76"/><polygon points="8,4 13,4 10.5,7" fill="#444"/></svg>
<svg style="left:1015px;top:250px" width="16" height="15" viewBox="0 0 16 15"><rect x="0.5" y="0.5" width="15" height="14" fill="url(#gp)" stroke="#5f6a76"/><text x="2" y="9" font-family="Liberation Sans" font-size="11" fill="#505860" textLength="11" lengthAdjust="spacingAndGlyphs">tx</text></svg>
<svg style="left:1015px;top:274px" width="16" height="8" viewBox="0 0 16 8"><rect x="0.5" y="0.5" width="15" height="7" fill="#f6f8fa" stroke="#5f6a76"/><rect x="1" y="1" width="9.5" height="6" fill="#a9c3de"/></svg>
<svg style="left:1015px;top:292px" width="16" height="11" viewBox="0 0 16 11"><rect x="0.5" y="0.5" width="15" height="10" fill="url(#gb)" stroke="#5f6a76"/><rect x="1" y="1" width="4.5" height="9" fill="#fbfbfb"/><path d="M5.5,0.5 V10.5" stroke="#5f6a76"/><polygon points="8,4.5 13,4.5 10.5,1.5" fill="#444"/><polygon points="8,6.5 13,6.5 10.5,9.5" fill="#444"/></svg>
<svg style="left:1015px;top:310px" width="16" height="15" viewBox="0 0 16 15"><rect x="0.5" y="0.5" width="15" height="14" fill="url(#gp)" stroke="#5f6a76"/><text x="2.5" y="9" font-family="Liberation Sans" font-size="11" font-style="italic" fill="#5a4ab0" textLength="10" lengthAdjust="spacingAndGlyphs">tx</text><path d="M3,11.5 H13" stroke="#5a4ab0"/></svg>
<svg style="left:1128px;top:193px" width="16" height="10" viewBox="0 0 16 10"><rect x="0.5" y="0.5" width="15" height="9" fill="url(#gb)" stroke="#5f6a76"/><text x="3" y="8" font-family="Liberation Sans" font-size="8" fill="#4a5664">OK</text></svg>
<svg style="left:1128px;top:213px" width="16" height="9" viewBox="0 0 16 9"><circle cx="4" cy="4.5" r="3.3" fill="#f0f4f8" stroke="#5f6a76"/><circle cx="4" cy="4.5" r="1.4" fill="#333"/><path d="M8.5,4.5 H15.5" stroke="#5f6a76"/></svg>
<svg style="left:1128px;top:230px" width="16" height="15" viewBox="0 0 16 15"><rect x="0.5" y="0.5" width="15" height="14" fill="#f8f8f8" stroke="#5f6a76"/><path d="M11.5,0.5 V14.5" stroke="#5f6a76"/><rect x="12" y="4" width="3" height="3" fill="#a9c3de"/><rect x="1" y="6" width="10" height="2.5" fill="#c8d8e8"/><path d="M2,3.5 H10 M2,6.5 H9 M2,10.5 H9" stroke="#8a949e" stroke-width="0.8"/></svg>
<svg style="left:1128px;top:253px" width="16" height="9" viewBox="0 0 16 9"><rect x="0.5" y="0.5" width="15" height="8" fill="#f2f2f2" stroke="#5f6a76"/><polygon points="2,4.5 6,1.5 6,7.5" fill="#444"/><rect x="8" y="1" width="5" height="7" fill="#b8cde2"/><path d="M9.5,3 V6.5 M11.5,3 V6.5" stroke="#5f6a76" stroke-width="0.8"/></svg>
<svg style="left:1128px;top:273px" width="16" height="10" viewBox="0 0 16 10"><rect x="0.5" y="0.5" width="15" height="9" fill="url(#gp)" stroke="#5f6a76"/><path d="M3,7 L5,3 M6.5,5 H8.5 M10,7 L12,3" stroke="#444" stroke-width="1"/></svg>
<svg style="left:1128px;top:290px" width="16" height="15" viewBox="0 0 16 15"><rect x="0" y="1" width="16" height="13" fill="url(#gp)"/><path d="M0.5,0 V15 M15.5,0 V15" stroke="#5f6a76"/><path d="M1,7.5 H15" stroke="#4a6aa8"/></svg>
<svg style="left:1128px;top:310px" width="16" height="15" viewBox="0 0 16 15"><rect x="0.5" y="0.5" width="15" height="14" fill="url(#gp)" stroke="#5f6a76"/><rect x="2.5" y="3" width="2" height="2" fill="#a9c3de" stroke="#5f6a76" stroke-width="0.7"/><path d="M3.5,5 V10.5 H7" fill="none" stroke="#444"/><rect x="8.5" y="2.5" width="5" height="4" fill="#b8cde2" stroke="#5f6a76" stroke-width="0.8"/><rect x="8.5" y="8.5" width="4" height="4.5" fill="#fff" stroke="#5f6a76" stroke-width="0.8"/></svg>
<svg style="left:1241px;top:193px" width="16" height="10" viewBox="0 0 16 10"><rect x="0.5" y="0.5" width="15" height="9" fill="url(#gb)" stroke="#5f6a76"/><text x="2" y="8" font-family="Liberation Sans" font-size="8" fill="#4a5664">ON</text></svg>
<svg style="left:1241px;top:210px" width="16" height="14" viewBox="0 0 16 14"><circle cx="4" cy="3.8" r="3.3" fill="#f0f4f8" stroke="#5f6a76"/><circle cx="4" cy="3.8" r="1.4" fill="#333"/><circle cx="4" cy="10.2" r="3.3" fill="#e4e8ec" stroke="#5f6a76"/><path d="M8.5,3.5 H15.5 M8.5,10.5 H15.5" stroke="#5f6a76"/></svg>
<svg style="left:1241px;top:232px" width="16" height="11" viewBox="0 0 16 11"><rect x="0.5" y="0.5" width="15" height="10" fill="url(#gp)" stroke="#5f6a76"/></svg>
<svg style="left:1241px;top:251px" width="16" height="14" viewBox="0 0 16 14"><rect x="0.5" y="3.5" width="15" height="6" fill="#e8eef4" stroke="#5f6a76"/><path d="M5.5,0.5 H10.5 V8 L8,11.5 L5.5,8 Z" fill="url(#gb)" stroke="#5f6a76"/></svg>
<svg style="left:1241px;top:273px" width="16" height="10" viewBox="0 0 16 10"><rect x="0.5" y="0.5" width="15" height="9" fill="url(#gp)" stroke="#5f6a76"/><g fill="#444"><rect x="3.5" y="4" width="2" height="2"/><rect x="7" y="4" width="2" height="2"/><rect x="10.5" y="4" width="2" height="2"/></g></svg>
<svg style="left:1241px;top:290px" width="16" height="15" viewBox="0 0 16 15"><rect x="0.5" y="0.5" width="15" height="14" fill="url(#gp)" stroke="#5f6a76"/><text x="3.5" y="12" font-family="Liberation Serif" font-size="12" font-weight="bold" fill="#555">T</text></svg>
<svg style="left:1241px;top:310px" width="16" height="15" viewBox="0 0 16 15"><rect x="0.5" y="0.5" width="15" height="14" fill="#fff" stroke="#5f6a76"/><rect x="1" y="1" width="14" height="3" fill="#a9c3de"/><path d="M5.5,0.5 V14.5 M10.5,0.5 V14.5 M0.5,4.5 H15.5 M0.5,7.5 H15.5 M0.5,10.5 H15.5" stroke="#8a9aaa" stroke-width="0.8"/><rect x="6" y="8" width="4" height="2.5" fill="#4a6ad0"/></svg>


<!-- ===== PROPERTIES ===== -->
<div class="a" style="left:1011px;top:408px;width:350px;height:331px;background:#f2f2f2;border-left:1px solid #b4b4b4"></div>
<div class="t" style="left:1017px;top:414px;letter-spacing:-0.15px">[JFrame] - Properties</div>
<svg style="left:1132px;top:416px" width="9" height="9" viewBox="0 0 9 9"><path d="M0.5,0.5 L8.5,8.5 M8.5,0.5 L0.5,8.5" stroke="#505050" stroke-width="1"/></svg>
<div class="vs" style="left:1147px;top:411px;height:18px"></div>
<div class="a" style="left:1344px;top:424px;width:10px;height:1px;background:#444"></div>
<div class="a" style="left:1011px;top:432px;width:136px;height:3px;background:#96a2b6"></div>
<div class="a" style="left:1147px;top:434px;width:214px;height:1px;background:#c4c4c4"></div>
<div class="a" style="left:1016px;top:438px;width:66px;height:16px;background:#cdcdcd;border-radius:4px"></div>
<div class="t" style="left:1023px;top:440px;letter-spacing:-0.2px">Properties</div>
<div class="t" style="left:1104px;top:440px;letter-spacing:-0.2px">Events</div>
<div class="t" style="left:1179px;top:440px;letter-spacing:-0.2px">Code</div>
<div class="a" style="left:1012px;top:457px;width:349px;height:1px;background:#c8c8c8"></div>
<!-- table bg -->
<div class="a" style="left:1012px;top:458px;width:339px;height:215px;background:#fff"></div>
<div class="a" style="left:1351px;top:458px;width:10px;height:55px;background:#d9d9d9"></div>
<div class="a" style="left:1351px;top:513px;width:10px;height:160px;background:#f3f3f3"></div>
<div class="a" style="left:1012px;top:458px;width:339px;height:19px;background:#d9d9d9"></div>
<div class="a" style="left:1012px;top:514px;width:339px;height:20px;background:#d9d9d9"></div>
<!-- row lines -->
<div class="a" style="left:1012px;top:495px;width:339px;height:1px;background:#d8d8d8"></div>
<div class="a" style="left:1012px;top:552px;width:339px;height:1px;background:#d8d8d8"></div>
<div class="a" style="left:1012px;top:571px;width:339px;height:1px;background:#d8d8d8"></div>
<div class="a" style="left:1012px;top:590px;width:339px;height:1px;background:#d8d8d8"></div>
<div class="a" style="left:1012px;top:609px;width:339px;height:1px;background:#d8d8d8"></div>
<div class="a" style="left:1012px;top:628px;width:339px;height:1px;background:#d8d8d8"></div>
<div class="a" style="left:1012px;top:647px;width:339px;height:1px;background:#d8d8d8"></div>
<div class="a" style="left:1012px;top:666px;width:339px;height:1px;background:#d8d8d8"></div>
<div class="a" style="left:1181px;top:477px;width:1px;height:37px;background:#d8d8d8"></div>
<div class="a" style="left:1181px;top:534px;width:1px;height:139px;background:#d8d8d8"></div>
<div class="a" style="left:1012px;top:673px;width:349px;height:1px;background:#dcdcdc"></div>
<div class="a" style="left:1012px;top:677px;width:349px;height:1px;background:#c4c4c4"></div>
<!-- categories -->
<svg style="left:1014px;top:465px" width="10" height="7" viewBox="0 0 10 7"><polyline points="0.8,1 5,5.3 9.2,1" fill="none" stroke="#b0b0b0" stroke-width="1.7"/></svg>
<div class="t" style="left:1026px;top:461px;letter-spacing:-0.2px">Properties</div>
<svg style="left:1014px;top:521px" width="10" height="7" viewBox="0 0 10 7"><polyline points="0.8,1 5,5.3 9.2,1" fill="none" stroke="#b0b0b0" stroke-width="1.7"/></svg>
<div class="t" style="left:1026px;top:518px;letter-spacing:-0.25px">Other Properties</div>
<!-- names -->
<div class="t b" style="left:1014px;top:480px;letter-spacing:-0.2px">defaultCloseOperation</div>
<div class="t" style="left:1014px;top:499px;letter-spacing:0.4px">title</div>
<div class="t" style="left:1014px;top:537px;letter-spacing:-0.2px">alwaysOnTop</div>
<div class="t" style="left:1014px;top:556px;letter-spacing:-0.2px">alwaysOnTopSupported</div>
<div class="t" style="left:1014px;top:575px;letter-spacing:-0.2px">autoRequestFocus</div>
<div class="t" style="left:1014px;top:594px;letter-spacing:0.05px">background</div>
<div class="t" style="left:1014px;top:613px;letter-spacing:-0.2px">bounds</div>
<div class="t" style="left:1014px;top:632px;letter-spacing:-0.2px">cursor</div>
<div class="t" style="left:1014px;top:651px;letter-spacing:-0.2px">enabled</div>
<div class="a" style="left:1048px;top:672px;width:1px;height:1px;background:#333"></div><div class="a" style="left:1061px;top:672px;width:1px;height:1px;background:#333"></div><div class="a" style="left:1065px;top:672px;width:3px;height:1px;background:#222"></div><div class="a" style="left:1186px;top:672px;width:3px;height:1px;background:#222"></div>
<!-- values -->
<div class="t" style="left:1188px;top:480px;letter-spacing:-1.0px">EXIT_ON_CLOSE</div>
<svg style="left:1320px;top:483px" width="10" height="6" viewBox="0 0 10 6"><polyline points="0.5,0.5 5,5 9.5,0.5" fill="none" stroke="#444" stroke-width="1"/></svg>
<svg style="left:1185px;top:536px" width="14" height="14" viewBox="0 0 14 14"><rect x="0.5" y="0.5" width="13" height="13" rx="2.5" fill="#fff" stroke="#a8a8a8"/></svg>
<svg style="left:1185px;top:555px" width="14" height="14" viewBox="0 0 14 14"><rect x="0.5" y="0.5" width="13" height="13" rx="2.5" fill="#f2f2f2" stroke="#b8b8b8"/><polyline points="3.2,7 5.8,9.8 10.8,3.5" fill="none" stroke="#a0a0a0" stroke-width="1.6"/></svg>
<svg style="left:1185px;top:574px" width="14" height="14" viewBox="0 0 14 14"><rect x="0.5" y="0.5" width="13" height="13" rx="2.5" fill="#fff" stroke="#3d8fe6"/><polyline points="3.2,7 5.8,9.8 10.8,3.5" fill="none" stroke="#3d8fe6" stroke-width="1.6"/></svg>
<svg style="left:1185px;top:595px" width="11" height="11" viewBox="0 0 11 11"><rect x="0.5" y="0.5" width="10" height="10" fill="#f2f2f2" stroke="#000"/></svg>
<div class="t" style="left:1203px;top:594px;letter-spacing:-0.45px">[242,242,242]</div>
<div class="t" style="left:1186px;top:613px;letter-spacing:-0.2px">&lt;Not Set&gt;</div>
<div class="t" style="left:1188px;top:632px;letter-spacing:-0.1px">Default Cursor</div>
<svg style="left:1320px;top:635px" width="10" height="6" viewBox="0 0 10 6"><polyline points="0.5,0.5 5,5 9.5,0.5" fill="none" stroke="#444" stroke-width="1"/></svg>
<svg style="left:1185px;top:650px" width="14" height="14" viewBox="0 0 14 14"><rect x="0.5" y="0.5" width="13" height="13" rx="2.5" fill="#fff" stroke="#3d8fe6"/><polyline points="3.2,7 5.8,9.8 10.8,3.5" fill="none" stroke="#3d8fe6" stroke-width="1.6"/></svg>
<!-- ... buttons -->
<svg style="left:1335px;top:477px" width="15" height="200" viewBox="0 0 15 200">
<g transform="translate(0,0)"><rect x="0.5" y="0.5" width="14" height="16" rx="3" fill="#fff" stroke="#c4c4c4"/><g fill="#000"><rect x="4" y="12" width="1" height="1.2"/><rect x="7" y="12" width="1" height="1.2"/><rect x="10" y="12" width="1" height="1.2"/></g></g>
<g transform="translate(0,19)"><rect x="0.5" y="0.5" width="14" height="16" rx="3" fill="#fff" stroke="#c4c4c4"/><g fill="#000"><rect x="4" y="12" width="1" height="1.2"/><rect x="7" y="12" width="1" height="1.2"/><rect x="10" y="12" width="1" height="1.2"/></g></g>
<g transform="translate(0,57)"><rect x="0.5" y="0.5" width="14" height="16" rx="3" fill="#fff" stroke="#c4c4c4"/><g fill="#000"><rect x="4" y="12" width="1" height="1.2"/><rect x="7" y="12" width="1" height="1.2"/><rect x="10" y="12" width="1" height="1.2"/></g></g>
<g transform="translate(0,95)"><rect x="0.5" y="0.5" width="14" height="16" rx="3" fill="#fff" stroke="#c4c4c4"/><g fill="#000"><rect x="4" y="12" width="1" height="1.2"/><rect x="7" y="12" width="1" height="1.2"/><rect x="10" y="12" width="1" height="1.2"/></g></g>
<g transform="translate(0,114)"><rect x="0.5" y="0.5" width="14" height="16" rx="3" fill="#fff" stroke="#c4c4c4"/><g fill="#000"><rect x="4" y="12" width="1" height="1.2"/><rect x="7" y="12" width="1" height="1.2"/><rect x="10" y="12" width="1" height="1.2"/></g></g>
<g transform="translate(0,133)"><rect x="0.5" y="0.5" width="14" height="16" rx="3" fill="#fff" stroke="#c4c4c4"/><g fill="#000"><rect x="4" y="12" width="1" height="1.2"/><rect x="7" y="12" width="1" height="1.2"/><rect x="10" y="12" width="1" height="1.2"/></g></g>
<g transform="translate(0,152)"><rect x="0.5" y="0.5" width="14" height="16" rx="3" fill="#fff" stroke="#c4c4c4"/><g fill="#000"><rect x="4" y="12" width="1" height="1.2"/><rect x="7" y="12" width="1" height="1.2"/><rect x="10" y="12" width="1" height="1.2"/></g></g>
<g transform="translate(0,171)"><rect x="0.5" y="0.5" width="14" height="16" rx="3" fill="#fff" stroke="#c4c4c4"/><g fill="#000"><rect x="4" y="12" width="1" height="1.2"/><rect x="7" y="12" width="1" height="1.2"/><rect x="10" y="12" width="1" height="1.2"/></g></g>
</svg>
<div class="a" style="left:1335px;top:667px;width:15px;height:6px;background:#fff;border:1px solid #c4c4c4;border-bottom:none;border-radius:3px 3px 0 0"></div>
<div class="t b" style="left:1014px;top:686px;letter-spacing:-0.2px">[JFrame]</div>
<svg style="left:1338px;top:683px" width="17" height="17" viewBox="0 0 17 17">
 <defs><radialGradient id="ghelp" cx="0.4" cy="0.3" r="0.7"><stop offset="0" stop-color="#7fb0f0"/><stop offset="1" stop-color="#2a5ab8"/></radialGradient></defs>
 <circle cx="8.5" cy="8.5" r="8" fill="url(#ghelp)" stroke="#24489a" stroke-width="0.8"/>
 <text x="4.6" y="13.2" font-family="Liberation Sans" font-weight="bold" font-size="12" fill="#fff">?</text>
</svg>
<!-- status bar -->
<div class="vs" style="left:1073px;top:746px;height:18px"></div>
<div class="vs" style="left:1184px;top:746px;height:18px"></div>
<div class="vs" style="left:1209px;top:746px;height:18px"></div>
<div class="vs" style="left:1299px;top:746px;height:18px"></div>
<div class="t" style="left:1187px;top:749px;letter-spacing:-0.3px">INS</div>


<!-- ===== STATUS BAR ===== -->
<div class="a" style="left:0;top:765px;width:1366px;height:1px;background:#fafafa"></div><div class="a" style="left:0;top:766px;width:1366px;height:2px;background:#252525"></div><div class="a" style="left:113px;top:766px;width:36px;height:2px;background:#4c4c4c"></div><div class="a" style="left:1361px;top:766px;width:1px;height:2px;background:#9a9a9a"></div>

<!-- ===== RED ANNOTATIONS ===== -->
<div class="red" style="left:187px;top:59px;width:485px;height:403px"></div>
<div class="red" style="left:181px;top:89px;width:83px;height:41px"></div>
<div class="red" style="left:1007px;top:67px;width:361px;height:337px"></div>
<div class="red" style="left:1003px;top:403px;width:363px;height:341px;border-right-width:5px"></div>

</body></html>
